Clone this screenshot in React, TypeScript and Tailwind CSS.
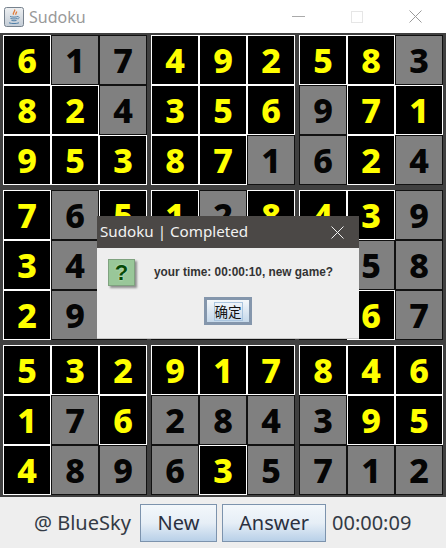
import React from 'react';

// '' = cell fully covered by the dialog, nothing of it shows
const BOARD = [
  ['6', '1', '7', '4', '9', '2', '5', '8', '3'],
  ['8', '2', '4', '3', '5', '6', '9', '7', '1'],
  ['9', '5', '3', '8', '7', '1', '6', '2', '4'],
  ['7', '6', '5', '1', '2', '8', '4', '3', '9'],
  ['3', '4', '', '', '', '', '', '5', '8'],
  ['2', '9', '', '', '', '', '', '6', '7'],
  ['5', '3', '2', '9', '1', '7', '8', '4', '6'],
  ['1', '7', '6', '2', '8', '4', '3', '9', '5'],
  ['4', '8', '9', '6', '3', '5', '7', '1', '2'],
];

// cells the player had to fill in stay grey
const GREY = [
  [0, 1, 1, 0, 0, 0, 0, 0, 1],
  [0, 0, 1, 0, 0, 0, 1, 0, 0],
  [0, 0, 0, 0, 0, 1, 1, 0, 1],
  [0, 1, 0, 0, 1, 0, 0, 0, 1],
  [0, 1, 1, 1, 1, 1, 1, 1, 1],
  [0, 1, 1, 1, 1, 1, 1, 0, 1],
  [0, 0, 0, 0, 0, 0, 0, 0, 0],
  [0, 1, 0, 1, 1, 1, 1, 0, 0],
  [0, 1, 1, 1, 0, 1, 1, 1, 1],
];

function Cell({ r, c }: { r: number; c: number }) {
  const grey = GREY[r][c] === 1;
  return (
    <div
      className={
        'flex items-center justify-center border text-[34px] leading-none font-extrabold ' +
        (grey
          ? 'bg-[#808080] border-[#111111] text-[#050505]'
          : 'bg-black border-white text-[#ffff00]')
      }
    >
      {BOARD[r][c]}
    </div>
  );
}

function Box({ bx, by }: { bx: number; by: number }) {
  const cells = [];
  for (let r = by * 3; r < by * 3 + 3; r++) {
    for (let c = bx * 3; c < bx * 3 + 3; c++) {
      cells.push(<Cell key={`${r}-${c}`} r={r} c={c} />);
    }
  }
  return <div className="grid grid-cols-3 grid-rows-3 w-[144px] h-[150px]">{cells}</div>;
}

function JavaIcon() {
  return (
    <svg width="20" height="20" viewBox="0 0 20 20" className="shrink-0">
      <defs>
        <linearGradient id="jv" x1="0" y1="0" x2="0" y2="1">
          <stop offset="0" stopColor="#eef0f2" />
          <stop offset="1" stopColor="#c3ccd6" />
        </linearGradient>
      </defs>
      <rect x="0.5" y="0.5" width="19" height="19" rx="2" fill="url(#jv)" stroke="#77828e" />
      <path d="M10.500 2.500c1.300 1.800-2.300 2.800-1 5.200M12.500 4.500c.6 1.100-1.300 1.800-.6 3.200" fill="none" stroke="#e07b3c" strokeWidth="1.300" />
      <path d="M6 9.500c2 .8 6 .8 8 0M6.500 11.500c1.800.6 5.200.6 7 0M7.500 13.500c1.500.4 3.500.4 5 0" fill="none" stroke="#4f7fa8" strokeWidth="1" />
      <path d="M14 9.800c1.800-.3 1.600 2-.5 2.300" fill="none" stroke="#4f7fa8" strokeWidth="0.800" />
      <path d="M5 15.800c2.500 1 7.500 1 10 0" fill="none" stroke="#4f7fa8" strokeWidth="1" />
    </svg>
  );
}

function BarButton({ label, w }: { label: string; w: string }) {
  return (
    <button
      className={
        w +
        ' h-[38px] border border-[#7c93ad] bg-gradient-to-b from-[#f3f7fb] via-[#e6eef6] to-[#b8d0e8] text-[20px] leading-none text-[#2b3040]'
      }
    >
      {label}
    </button>
  );
}

export default function App() {
  return (
    <div className="relative w-[446px] h-[548px] overflow-hidden bg-[#eeeeee] font-['Noto_Sans','Open_Sans',sans-serif]">
      {/* window title bar */}
      <div className="flex items-center h-[33px] bg-white pl-[4px]">
        <JavaIcon />
        <span className="ml-[5px] text-[16px] leading-none text-[#999999]">Sudoku</span>
        <div className="ml-auto flex items-center pr-[24px] gap-[46px]">
          <div className="w-[13px] h-px bg-[#aaaaaa]" />
          <div className="w-[12px] h-[12px] border border-[#e6e6e6]" />
          <svg width="13" height="13" viewBox="0 0 13 13">
            <path d="M.5.500l12 12M12.500.500l-12 12" stroke="#9a9a9a" strokeWidth="1" />
          </svg>
        </div>
      </div>

      {/* board */}
      <div className="grid grid-cols-[144px_144px_144px] gap-x-[4px] gap-y-[5px] bg-[#404040] pt-[2px] pb-[2px] pl-[3px] pr-[3px]">
        {[0, 1, 2].map((by) =>
          [0, 1, 2].map((bx) => <Box key={`${bx}-${by}`} bx={bx} by={by} />)
        )}
      </div>

      {/* bottom bar */}
      <div className="flex items-center h-[51px] pl-[34px]">
        <span className="w-[106px] text-[20px] leading-none text-[#333a45] whitespace-nowrap">@ BlueSky</span>
        <BarButton label="New" w="w-[77px]" />
        <div className="w-[5px]" />
        <BarButton label="Answer" w="w-[104px]" />
        <span className="ml-[6px] text-[20px] leading-none text-[#333a45]">00:00:09</span>
      </div>

      {/* completed dialog */}
      <div className="absolute left-[97px] top-[216px] w-[262px] h-[123px] bg-[#eeeeee] border-b border-[#c8c8c8]">
        <div className="flex items-center justify-between h-[32px] bg-[#4b4846] pl-[3px] pr-[15px]">
          <span className="text-[15.200px] leading-none text-[#f2f2f2]">Sudoku | Completed</span>
          <svg width="13" height="13" viewBox="0 0 13 13">
            <path d="M.5.500l12 12M12.500.500l-12 12" stroke="#f2f2f2" strokeWidth="1" />
          </svg>
        </div>
        <div className="flex items-center h-[49px] pl-[11px]">
          <div className="flex items-center justify-center w-[27px] h-[27px] bg-[#99c799] border border-[#7fa27f] shadow-[2px_2px_2px_rgba(0,0,0,0.4)] text-[22px] leading-none font-bold text-[#064a06] [text-shadow:0_0_2px_#d8f0d8] font-['Liberation_Sans',sans-serif]">
            ?
          </div>
          <span className="ml-[19px] text-[11.850px] leading-none font-bold text-[#333333] font-['Liberation_Sans',sans-serif] whitespace-nowrap">
            your time: 00:00:10, new game?
          </span>
        </div>
        <div className="flex justify-center">
          <button className="flex items-center justify-center w-[48px] h-[28px] border-[3px] border-[#8496ac] bg-gradient-to-b from-[#f5f8fb] to-[#c5d8ea]">
            <span className="border border-[#a9c4de] text-[13.500px] leading-[17px] text-[#111111] font-['Noto_Sans_CJK_SC',sans-serif] whitespace-nowrap">
              确定
            </span>
          </button>
        </div>
      </div>
    </div>
  );
}
